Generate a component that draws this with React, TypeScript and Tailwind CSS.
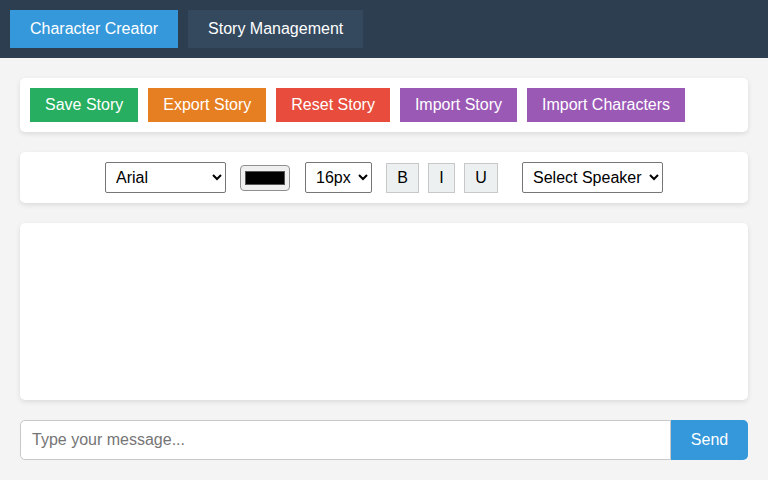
import { useState } from 'react';

const ACTIONS = [
  { label: 'Save Story', cls: 'bg-[#27ae60]' },
  { label: 'Export Story', cls: 'bg-[#e67e22]' },
  { label: 'Reset Story', cls: 'bg-[#e74c3c]' },
  { label: 'Import Story', cls: 'bg-[#9b59b6]' },
  { label: 'Import Characters', cls: 'bg-[#9b59b6]' },
];

export default function App() {
  const [tab, setTab] = useState('story');
  const [msg, setMsg] = useState('');

  return (
    <div className="min-h-[480px] bg-[#f4f4f4] font-['Liberation_Sans',Arial,sans-serif] text-[16px] text-[#333]">
      <nav className="flex gap-[10px] bg-[#2c3e50] p-[10px]">
        <button
          onClick={() => setTab('char')}
          className={`h-[38px] px-[20px] text-white ${tab === 'char' ? 'bg-[#34495e]' : 'bg-[#3498db]'}`}
        >
          Character Creator
        </button>
        <button
          onClick={() => setTab('story')}
          className="h-[38px] px-[20px] bg-[#34495e] text-white"
        >
          Story Management
        </button>
      </nav>

      <main className="flex flex-col gap-[20px] p-[20px]">
        <div className="flex gap-[10px] rounded-[5px] bg-white p-[10px] shadow-[0_2px_5px_rgba(0,0,0,0.1)]">
          {ACTIONS.map(a => (
            <button key={a.label} className={`h-[34px] px-[15px] text-white ${a.cls}`}>
              {a.label}
            </button>
          ))}
        </div>

        <div className="flex items-center justify-center rounded-[5px] bg-white p-[10px] shadow-[0_2px_5px_rgba(0,0,0,0.1)]">
          <select className="h-[31px] w-[121px] rounded-[2px] border border-[#767676] bg-white pl-[6px] text-black">
            <option>Arial</option>
            <option>Times New Roman</option>
            <option>Courier New</option>
          </select>
          <input
            type="color"
            defaultValue="#000000"
            className="ml-[14px] h-[26px] w-[50px] rounded-[4px] border border-[#8f8f8f] bg-[#efefef] px-[4px] py-[5px] [&::-webkit-color-swatch-wrapper]:p-0 [&::-webkit-color-swatch]:border-[#555]"
          />
          <select className="ml-[15px] h-[31px] w-[67px] rounded-[2px] border border-[#767676] bg-white pl-[6px] text-black">
            <option>16px</option>
            <option>12px</option>
            <option>20px</option>
          </select>
          <button className="ml-[14px] h-[30px] w-[33px] border border-[#c8c8c8] bg-[#ecf0f1] text-black">B</button>
          <button className="ml-[9px] h-[30px] w-[27px] border border-[#c8c8c8] bg-[#ecf0f1] text-black">I</button>
          <button className="ml-[9px] h-[30px] w-[34px] border border-[#c8c8c8] bg-[#ecf0f1] text-black">U</button>
          <select className="ml-[24px] h-[31px] w-[141px] rounded-[2px] border border-[#767676] bg-white pl-[6px] text-black">
            <option>Select Speaker</option>
          </select>
        </div>

        <div className="h-[177px] overflow-y-auto rounded-[5px] bg-white p-[10px] shadow-[0_2px_5px_rgba(0,0,0,0.1)]" />

        <div className="flex h-[40px]">
          <input
            value={msg}
            onChange={e => setMsg(e.target.value)}
            placeholder="Type your message..."
            className="min-w-0 flex-1 rounded-l-[5px] border border-[#c8c8c8] bg-white px-[11px] text-[#333] placeholder:text-[#757575] outline-none"
          />
          <button className="w-[77px] rounded-r-[5px] bg-[#3498db] text-white">Send</button>
        </div>
      </main>
    </div>
  );
}
